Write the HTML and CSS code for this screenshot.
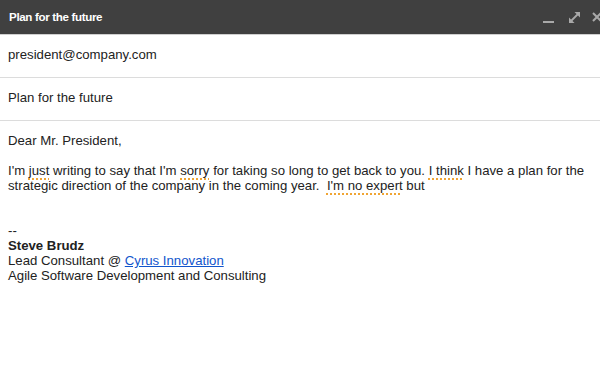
FILE: index.html
```html
<!DOCTYPE html>
<html lang="en">
<head>
<meta charset="UTF-8">
<title>Plan for the future</title>
<link rel="stylesheet" href="styles.css">
</head>
<body>
<div class="compose">
    <div class="compose-header">
        <span class="compose-title">Plan for the future</span>
        <div class="header-icons">
            <svg class="icon icon-min" width="11" height="12" viewBox="0 0 11 12">
                <rect x="0" y="8" width="11" height="2" fill="#a9a9a9"/>
            </svg>
            <svg class="icon icon-expand" width="13" height="13" viewBox="0 0 13 13">
                <path d="M3 10 L10 3" stroke="#a9a9a9" stroke-width="1.8"/>
                <path d="M6.5 1 H12 V6.5 Z" fill="#a9a9a9"/>
                <path d="M1 6.5 V12 H6.5 Z" fill="#a9a9a9"/>
            </svg>
            <svg class="icon icon-close" width="12" height="12" viewBox="0 0 12 12">
                <path d="M2 2 L10 10 M10 2 L2 10" stroke="#a9a9a9" stroke-width="2"/>
            </svg>
        </div>
    </div>

    <div class="field">president@company.com</div>
    <div class="field">Plan for the future</div>

    <div class="message">
        <p>Dear Mr. President,</p>
        <p>I'm <span class="spell">just</span> writing to say that I'm <span class="spell">sorry</span> for taking so long to get back to you. <span class="spell">I think</span> I have a plan for the<br>strategic direction of the company in the coming year.&nbsp; <span class="spell">I'm no expert</span> but</p>
        <p class="gap"></p>
        <div class="signature">
            --<br>
            <b>Steve Brudz</b><br>
            Lead Consultant @ <a href="#">Cyrus Innovation</a><br>
            Agile Software Development and Consulting
        </div>
    </div>
</div>
</body>
</html>
```

FILE: styles.css
```css
body, html {
    margin: 0;
    padding: 0;
    background: #fff;
    overflow: hidden;
}
.compose {
    width: 612px;
    font-family: "Liberation Sans", Arial, sans-serif;
    font-size: 13.2px;
    line-height: 15px;
    color: #222;
}
.compose-header {
    height: 34px;
    background-color: #404040;
    border-bottom: 1px solid #cfcfcf;
    display: flex;
    align-items: center;
    justify-content: space-between;
    padding: 0 0 0 9px;
}
.compose-title {
    color: #fff;
    font-size: 11.6px;
    font-weight: bold;
    letter-spacing: -0.35px;
    margin-top: -1px;
}
.header-icons {
    display: flex;
    align-items: center;
    padding-right: 9px;
}
.icon-min {
    margin-top: 4px;
    margin-right: 14px;
}
.icon-expand {
    margin-right: 10px;
}
.field {
    padding: 12px 8px 15px;
    border-bottom: 1px solid #dcdcdc;
}
.message {
    padding: 12px 8px;
}
.message p {
    margin: 0 0 15px;
}
.message .gap {
    margin: 0;
    height: 15px;
}
.spell {
    display: inline-block;
    height: 15px;
    text-decoration: underline dotted #f0a534;
    text-decoration-thickness: 2px;
    text-underline-offset: 3px;
}
.signature a {
    color: #1155cc;
}
```
